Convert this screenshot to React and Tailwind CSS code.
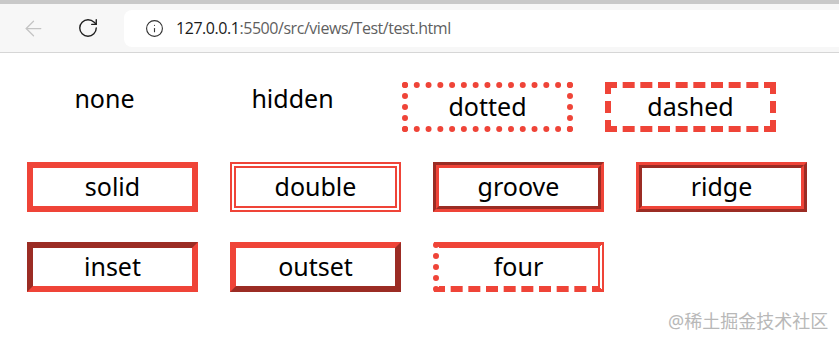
import React from 'react';
import { ArrowLeft, RotateCw, Info } from 'lucide-react';

const RED = 'border-[#ef4438]';

// 浏览器顶部栏
const Toolbar = () => (
  <div className="w-full">
    <div className="h-[4px] bg-[#c9c9c9]" />
    <div className="h-[49px] bg-[#f7f7f7] border-b border-[#d6d6d6] flex items-center">
      <div className="w-[66px] flex justify-center">
        <ArrowLeft size={25} strokeWidth={1.2} className="text-[#c4c4c4]" />
      </div>
      <div className="w-[44px] flex justify-center">
        <RotateCw size={22} strokeWidth={1.5} className="text-[#1f1f1f]" />
      </div>
      <div className="ml-[14px] flex-1 h-[37px] bg-white rounded-l-[8px] flex items-center pl-[21px]">
        <Info size={19} strokeWidth={1.4} className="text-[#333]" />
        <span className="ml-[12px] text-[16px] font-['Open_Sans',sans-serif] tracking-[-0.45px] text-[#5f5f5f]">
          <span className="text-[#1a1a1a]">127.0.0.1</span>:5500/src/views/Test/test.html
        </span>
      </div>
    </div>
  </div>
);

const Box = ({ label, className }) => (
  <div className={`w-[171px] h-[50px] flex items-center justify-center shrink-0 ${className}`}>
    {label}
  </div>
);

export default function App() {
  return (
    <div className="relative w-[839px] h-[345px] bg-white overflow-hidden font-['Noto_Sans',sans-serif] text-[25px] text-black">
      <Toolbar />
      <div className="pt-[29px] flex flex-col gap-[30px]">
        <div className="flex pl-[26px] gap-[31px]">
          <div className="w-[157px] h-[50px] pb-[16px] flex items-center justify-center shrink-0">none</div>
          <div className="w-[157px] h-[50px] pb-[16px] flex items-center justify-center shrink-0 border-hidden">hidden</div>
          <Box label="dotted" className={`border-[6px] border-dotted ${RED}`} />
          <Box label="dashed" className={`ml-[1px] border-[6px] border-dashed ${RED}`} />
        </div>
        <div className="flex pl-[27px] gap-[32px]">
          <Box label="solid" className={`border-[6px] border-solid ${RED}`} />
          <Box label="double" className={`border-[6px] border-double ${RED}`} />
          <Box label="groove" className={`border-[6px] [border-style:groove] ${RED}`} />
          <Box label="ridge" className={`border-[6px] [border-style:ridge] ${RED}`} />
        </div>
        <div className="flex pl-[27px] gap-[32px]">
          <Box label="inset" className={`border-[6px] [border-style:inset] ${RED}`} />
          <Box label="outset" className={`border-[6px] [border-style:outset] ${RED}`} />
          <Box label="four" className={`border-[6px] [border-style:solid_double_dashed_dotted] ${RED}`} />
        </div>
      </div>
      <div className="absolute left-[668px] top-[308px] text-[18px] text-[#b8b8b8] font-['Noto_Sans','Noto_Sans_CJK_SC',sans-serif]">
        @稀土掘金技术社区
      </div>
    </div>
  );
}
